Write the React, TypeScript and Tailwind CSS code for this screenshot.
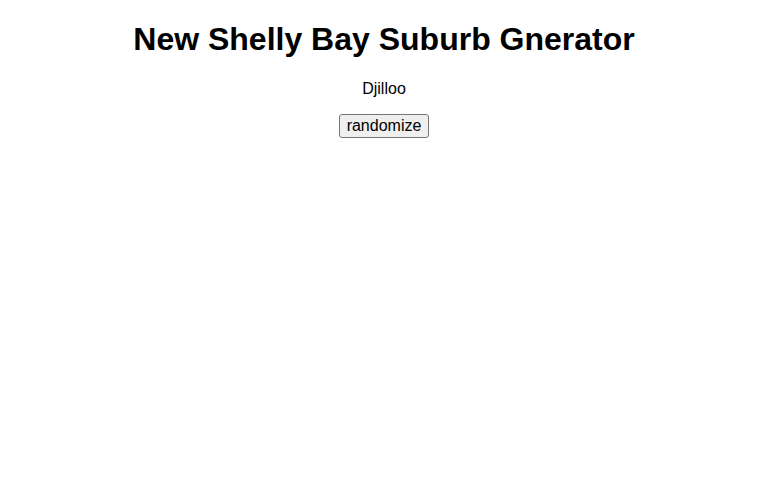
import { useState } from 'react';

const parts = ['Dj', 'ill', 'oo', 'Kar', 'ori', 'Wai', 'nui', 'Tar', 'aki', 'Mir'];

function makeName() {
    const n = 2 + Math.floor(Math.random() * 2);
    let s = '';
    for (let i = 0; i < n; i++) s += parts[Math.floor(Math.random() * parts.length)];
    return s.charAt(0).toUpperCase() + s.slice(1).toLowerCase();
}

export default function App() {
    const [name, setName] = useState('Djilloo');

    return (
        <div className="min-h-[480px] bg-white text-center text-black font-['Liberation_Sans',Arial,sans-serif]">
            <h1 className="pt-[21.44px] text-[32px] leading-[normal] font-bold">New Shelly Bay Suburb Gnerator</h1>
            <p className="mt-[21.44px] text-base leading-[normal]">{name}</p>
            <div className="mt-4">
                <button
                    onClick={() => setName(makeName())}
                    className="px-[7px] py-[2px] text-base leading-[normal] bg-[#efefef] border border-[#767676] rounded-[3px] hover:bg-[#e5e5e5]"
                >
                    randomize
                </button>
            </div>
        </div>
    );
}
